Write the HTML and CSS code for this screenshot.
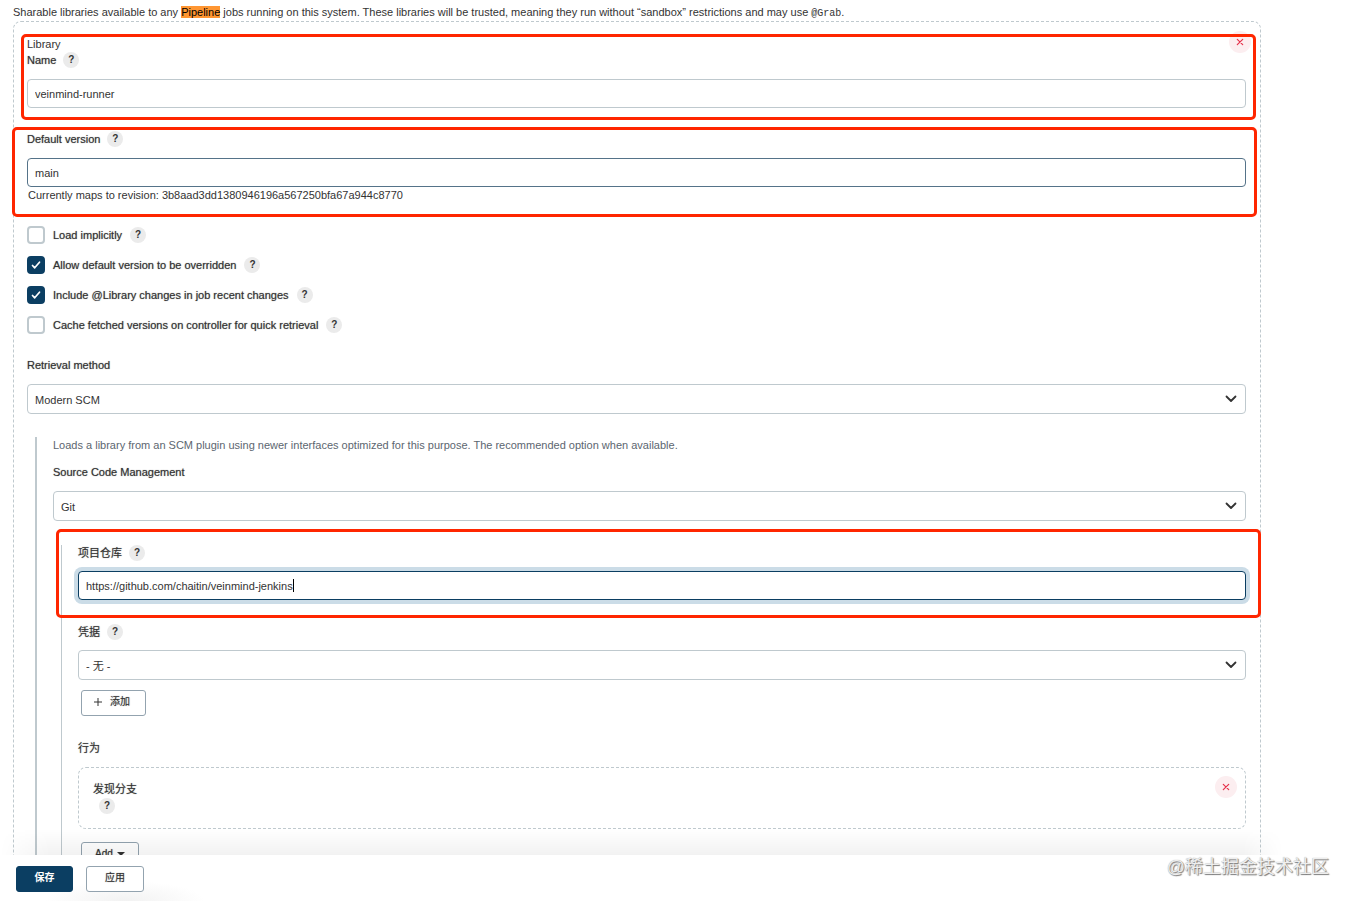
FILE: index.html
```html
<!DOCTYPE html>
<html lang="zh-CN">
<head>
<meta charset="utf-8">
<meta name="viewport" content="width=device-width, initial-scale=1">
<title>Global Pipeline Libraries</title>
<link rel="stylesheet" href="styles.css">
</head>
<body>
<svg width="0" height="0" class="sprite" aria-hidden="true">
  <symbol id="chevron" viewBox="0 0 12 8"><path d="M1.500 1.500 6 6l4.500-4.500" fill="none" stroke="#333" stroke-width="1.800" stroke-linecap="round" stroke-linejoin="round"/></symbol>
  <symbol id="cross" viewBox="0 0 8 8"><path d="M1.300 1.300l5.400 5.400M6.700 1.300 1.300 6.700" fill="none" stroke="currentColor" stroke-width="1.200" stroke-linecap="round"/></symbol>
  <symbol id="tick" viewBox="0 0 18 18"><path d="M5.500 9.500 7.700 11.800l4.800-5.600" fill="none" stroke="#fff" stroke-width="1.700" stroke-linecap="round" stroke-linejoin="round"/></symbol>
  <symbol id="plus" viewBox="0 0 8 8"><path d="M4 0v8M0 4h8" fill="none" stroke="#333" stroke-width="1"/></symbol>
</svg>
<form class="page">
  <main class="content">
    <p class="intro">Sharable libraries available to any <mark class="hit">Pipeline</mark> jobs running on this system. These libraries will be trusted, meaning they run without “sandbox” restrictions and may use <code class="code">@Grab</code>.</p>
    <div class="library">
      <button type="button" class="remove remove-library" aria-label="Remove library"><svg class="cross"><use href="#cross"/></svg></button>
      <section class="group">
        <div class="line">Library</div>
        <div class="label-row"><label class="label" for="name">Name</label><button type="button" class="help">?</button></div>
        <input class="field" id="name" type="text" value="veinmind-runner">
        <span class="outline outline-name"></span>
      </section>
      <section class="group">
        <div class="label-row"><label class="label" for="version">Default version</label><button type="button" class="help">?</button></div>
        <input class="field field-hover" id="version" type="text" value="main">
        <div class="line line-note">Currently maps to revision: 3b8aad3dd1380946196a567250bfa67a944c8770</div>
        <span class="outline outline-version"></span>
      </section>
      <section class="checks">
        <div class="check-row"><span class="check"><input class="box" type="checkbox" id="implicit"></span><label class="label" for="implicit">Load implicitly</label><button type="button" class="help">?</button></div>
        <div class="check-row"><span class="check"><input class="box" type="checkbox" id="override" checked><svg class="tick"><use href="#tick"/></svg></span><label class="label" for="override">Allow default version to be overridden</label><button type="button" class="help">?</button></div>
        <div class="check-row"><span class="check"><input class="box" type="checkbox" id="include" checked><svg class="tick"><use href="#tick"/></svg></span><label class="label" for="include">Include @Library changes in job recent changes</label><button type="button" class="help">?</button></div>
        <div class="check-row"><span class="check"><input class="box" type="checkbox" id="cache"></span><label class="label" for="cache">Cache fetched versions on controller for quick retrieval</label><button type="button" class="help">?</button></div>
      </section>
      <section class="group">
        <div class="label-row"><label class="label" for="method">Retrieval method</label></div>
        <div class="picker"><select class="field select" id="method"><option>Modern SCM</option></select><svg class="chevron"><use href="#chevron"/></svg></div>
      </section>
      <div class="nested nested-outer">
        <div class="line description">Loads a library from an SCM plugin using newer interfaces optimized for this purpose. The recommended option when available.</div>
        <section class="group">
          <div class="label-row"><label class="label" for="scm">Source Code Management</label></div>
          <div class="picker"><select class="field select" id="scm"><option>Git</option></select><svg class="chevron"><use href="#chevron"/></svg></div>
        </section>
        <div class="nested nested-inner">
          <section class="group">
            <div class="label-row label-row-tight"><label class="label" for="repo">项目仓库</label><button type="button" class="help">?</button></div>
            <div class="picker"><input class="field field-focus" id="repo" type="text" value="https://github.com/chaitin/veinmind-jenkins"><span class="caret"></span></div>
            <span class="outline outline-repo"></span>
          </section>
          <section class="group">
            <div class="label-row label-row-tight"><label class="label" for="credentials">凭据</label><button type="button" class="help">?</button></div>
            <div class="picker"><select class="field select" id="credentials"><option>- 无 -</option></select><svg class="chevron"><use href="#chevron"/></svg></div>
            <button type="button" class="button button-add"><svg class="plus"><use href="#plus"/></svg>添加</button>
          </section>
          <section class="group">
            <div class="label-row"><span class="label">行为</span></div>
            <div class="behaviour">
              <div class="behaviour-text"><span class="label">发现分支</span><button type="button" class="help">?</button></div>
              <button type="button" class="remove" aria-label="Remove behaviour"><svg class="cross"><use href="#cross"/></svg></button>
            </div>
            <button type="button" class="button button-menu">Add<span class="arrow"></span></button>
          </section>
        </div>
      </div>
    </div>
  </main>
  <footer class="footer">
    <button type="submit" class="button button-primary">保存</button>
    <button type="button" class="button">应用</button>
    <span class="watermark">@稀土掘金技术社区</span>
  </footer>
</form>
</body>
</html>
```

FILE: styles.css
```css
* { box-sizing: border-box; }
body {
  margin: 0;
  background: #fff;
  color: #333;
  font: 11px/16px "Liberation Sans", "Noto Sans CJK SC", sans-serif;
}
button, input, select { font: inherit; color: inherit; margin: 0; }
.sprite { position: absolute; }
.page {
  height: 100vh;
  display: grid;
  grid-template-rows: minmax(0, 1fr) auto;
}
.content {
  overflow: auto;
  scrollbar-width: none;
  padding: 4px 92px 0 13px;
}
.intro { margin: 0 0 1px; }
.hit { background: #ff9632; color: #000; }
.code { font: 10px/12px "Liberation Mono", monospace; }

.library {
  position: relative;
  display: flex;
  flex-direction: column;
  gap: 23px;
  padding: 14px 14px 24px 13px;
  border: 1px dashed #bfc9ce;
  border-radius: 8px;
}
.group { position: relative; display: flex; flex-direction: column; }
.line { height: 16px; }
.line-note { padding-left: 1px; }
.label-row { display: flex; align-items: center; gap: 7px; height: 16px; margin-bottom: 11px; }
.label-row-tight { margin-bottom: 10px; }
.label { text-shadow: 0 0 1px rgba(51, 51, 51, 0.6); }
.help {
  width: 16px;
  height: 16px;
  padding: 0;
  border: 0;
  border-radius: 50%;
  background: #ebebeb;
  font-size: 10px;
  font-weight: bold;
  line-height: 16px;
  text-align: center;
}
.field {
  display: block;
  width: 100%;
  height: 29px;
  padding: 1px 7px 0;
  border: 1px solid #bfc9ce;
  border-radius: 4px;
  background: #fff;
  outline: 0;
}
.field-hover { border-color: #557389; }
.field-focus { border-color: #0b3e62; box-shadow: 0 0 0 4px #cbdce7; }
.select { appearance: none; height: 30px; }
.picker { position: relative; }
.chevron { position: absolute; right: 9px; top: 11px; width: 12px; height: 8px; pointer-events: none; }
.caret { position: absolute; left: 215px; top: 8px; width: 1px; height: 13px; background: #000; }

.checks { display: flex; flex-direction: column; gap: 12px; }
.check-row { display: flex; align-items: center; gap: 8px; height: 18px; }
.check { position: relative; width: 18px; height: 18px; }
.box {
  appearance: none;
  display: block;
  width: 18px;
  height: 18px;
  border: 2px solid #bfc9ce;
  border-radius: 4px;
}
.box:checked { border-color: #0b3e62; background: #0b3e62; }
.tick { position: absolute; inset: 0; width: 18px; height: 18px; pointer-events: none; }

.nested {
  display: flex;
  flex-direction: column;
  gap: 11px;
  margin-left: 8px;
  padding-left: 16px;
  border-left: 2px solid #bfc9ce;
}
.nested-inner { gap: 24px; margin-top: 13px; border-left-width: 1px; }
.description { color: #5c6670; }

.button {
  display: inline-flex;
  align-items: center;
  justify-content: center;
  min-width: 58px;
  height: 26px;
  padding: 0 12px 2px;
  border: 1px solid #93a3af;
  border-radius: 3px;
  background: #fff;
  font-size: 10px;
  text-shadow: 0 0 1px rgba(51, 51, 51, 0.6);
}
.button-add { align-self: flex-start; justify-content: flex-start; gap: 8px; min-width: 65px; margin: 10px 0 0 3px; }
.plus { width: 8px; height: 8px; }
.button-menu { align-self: flex-start; gap: 4px; margin: 13px 0 0 3px; }
.arrow { border: 4px solid transparent; border-top-color: #333; border-bottom: 0; }
.button-primary { min-width: 57px; border-color: #0b3e62; background: #0b3e62; color: #fff; font-weight: bold; text-shadow: none; }

.behaviour {
  display: flex;
  justify-content: space-between;
  align-items: flex-start;
  padding: 8px;
  height: 62px;
  border: 1px dashed #bfc9ce;
  border-radius: 8px;
}
.behaviour-text { display: flex; flex-direction: column; padding: 5px 6px; }
.behaviour-text .help { margin-left: 6px; margin-top: 1px; }
.remove {
  display: grid;
  place-items: center;
  width: 22px;
  height: 22px;
  padding: 0;
  border: 0;
  border-radius: 50%;
  background: #fceef0;
  color: #e6324b;
}
.remove-library { position: absolute; right: 9px; top: 9px; }
.cross { width: 8px; height: 8px; }

.outline { position: absolute; border: 3px solid #ff2600; border-radius: 5px; pointer-events: none; }
.outline-name { inset: -2px -10px -12px -6px; }
.outline-version { inset: -4px -11px -14px -15px; }
.outline-repo { inset: -16px -15px -18px -22px; }

.footer {
  position: relative;
  display: flex;
  gap: 13px;
  padding: 11px 16px 9px;
  background: radial-gradient(80px 20px at 125px 100%, #f2f2f2, #fff);
}
.footer::before {
  content: "";
  position: absolute;
  left: 0;
  right: 70px;
  bottom: 100%;
  height: 26px;
  background: linear-gradient(rgba(0, 0, 0, 0), rgba(0, 0, 0, 0.05));
  mask-image: linear-gradient(to right, transparent, #000 50px, #000 calc(100% - 40px), transparent);
  pointer-events: none;
}
.watermark {
  position: absolute;
  right: 24px;
  top: 0;
  color: #eee;
  font-size: 18px;
  line-height: 24px;
  text-shadow: 1px 1px 1px #777, 0 0 1px #999;
}
```
